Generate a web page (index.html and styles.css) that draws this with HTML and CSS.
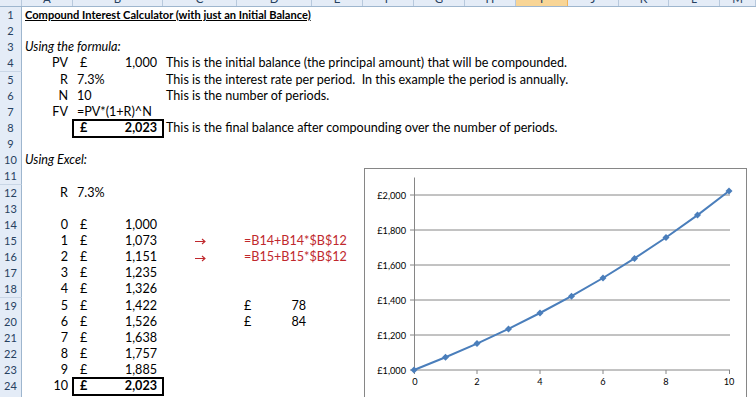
FILE: index.html
```html
<!DOCTYPE html>
<html lang="en">
<head>
    <meta charset="UTF-8">
    <title>Compound Interest Calculator</title>
    <link rel="stylesheet" href="styles.css">
</head>
<body>
    <div class="colhead">
        <div class="ch"></div>
        <div class="ch"><span>A</span></div>
        <div class="ch"><span>B</span></div>
        <div class="ch"><span>C</span></div>
        <div class="ch"><span>D</span></div>
        <div class="ch"><span>E</span></div>
        <div class="ch"><span>F</span></div>
        <div class="ch"><span>G</span></div>
        <div class="ch"><span>H</span></div>
        <div class="ch sel"><span>I</span></div>
        <div class="ch"><span>J</span></div>
        <div class="ch"><span>K</span></div>
        <div class="ch"><span>L</span></div>
        <div class="ch"><span>M</span></div>
    </div>

    <div class="row"><div class="rh">1</div><div class="c title">Compound Interest Calculator (with just an Initial Balance)</div></div>
    <div class="row"><div class="rh">2</div></div>
    <div class="row"><div class="rh">3</div><div class="c it">Using the formula:</div></div>
    <div class="row"><div class="rh">4</div><div class="c r">PV</div><div class="c acct"><span>£</span><span>1,000</span></div><div class="c">This is the initial balance (the principal amount) that will be compounded.</div></div>
    <div class="row"><div class="rh">5</div><div class="c r">R</div><div class="c txt">7.3%</div><div class="c">This is the interest rate per period.  In this example the period is annually.</div></div>
    <div class="row"><div class="rh">6</div><div class="c r">N</div><div class="c txt">10</div><div class="c">This is the number of periods.</div></div>
    <div class="row"><div class="rh">7</div><div class="c r">FV</div><div class="c txt">=PV*(1+R)^N</div></div>
    <div class="row"><div class="rh">8</div><div class="c"></div><div class="c acct box"><span>£</span><span>2,023</span></div><div class="c">This is the final balance after compounding over the number of periods.</div></div>
    <div class="row"><div class="rh">9</div></div>
    <div class="row"><div class="rh">10</div><div class="c it">Using Excel:</div></div>
    <div class="row"><div class="rh">11</div></div>
    <div class="row"><div class="rh">12</div><div class="c r">R</div><div class="c txt">7.3%</div></div>
    <div class="row"><div class="rh">13</div></div>
    <div class="row"><div class="rh">14</div><div class="c r">0</div><div class="c acct"><span>£</span><span>1,000</span></div></div>
    <div class="row"><div class="rh">15</div><div class="c r">1</div><div class="c acct"><span>£</span><span>1,073</span></div><div class="c arrow"><svg width="11" height="7" viewBox="0 0 11 7"><path d="M0 3.5H10M7 1L10 3.5L7 6"/></svg></div><div class="c fx red">=B14+B14*$B$12</div></div>
    <div class="row"><div class="rh">16</div><div class="c r">2</div><div class="c acct"><span>£</span><span>1,151</span></div><div class="c arrow"><svg width="11" height="7" viewBox="0 0 11 7"><path d="M0 3.5H10M7 1L10 3.5L7 6"/></svg></div><div class="c fx red">=B15+B15*$B$12</div></div>
    <div class="row"><div class="rh">17</div><div class="c r">3</div><div class="c acct"><span>£</span><span>1,235</span></div></div>
    <div class="row"><div class="rh">18</div><div class="c r">4</div><div class="c acct"><span>£</span><span>1,326</span></div></div>
    <div class="row"><div class="rh">19</div><div class="c r">5</div><div class="c acct"><span>£</span><span>1,422</span></div><div class="c"></div><div class="c acct"><span>£</span><span>78</span></div></div>
    <div class="row"><div class="rh">20</div><div class="c r">6</div><div class="c acct"><span>£</span><span>1,526</span></div><div class="c"></div><div class="c acct"><span>£</span><span>84</span></div></div>
    <div class="row"><div class="rh">21</div><div class="c r">7</div><div class="c acct"><span>£</span><span>1,638</span></div></div>
    <div class="row"><div class="rh">22</div><div class="c r">8</div><div class="c acct"><span>£</span><span>1,757</span></div></div>
    <div class="row"><div class="rh">23</div><div class="c r">9</div><div class="c acct"><span>£</span><span>1,885</span></div></div>
    <div class="row"><div class="rh">24</div><div class="c r">10</div><div class="c acct box"><span>£</span><span>2,023</span></div></div>
    <div class="row"><div class="rh">25</div></div>

    <!-- chart floats over the sheet, like an Excel chart object -->
    <div class="chart">
        <svg width="381" height="240">
            <g transform="translate(-1 -1)" class="axes">
                <line x1="50" y1="27" x2="366" y2="27"/>
                <line x1="50" y1="62" x2="366" y2="62"/>
                <line x1="50" y1="97" x2="366" y2="97"/>
                <line x1="50" y1="132" x2="366" y2="132"/>
                <line x1="50" y1="167" x2="366" y2="167"/>
                <line x1="50.5" y1="9.5" x2="50.5" y2="206"/>
                <line x1="46" y1="202" x2="366" y2="202"/>
                <line x1="46" y1="27" x2="50" y2="27"/>
                <line x1="46" y1="62" x2="50" y2="62"/>
                <line x1="46" y1="97" x2="50" y2="97"/>
                <line x1="46" y1="132" x2="50" y2="132"/>
                <line x1="46" y1="167" x2="50" y2="167"/>
                <line x1="113" y1="202" x2="113" y2="206"/>
                <line x1="176" y1="202" x2="176" y2="206"/>
                <line x1="239" y1="202" x2="239" y2="206"/>
                <line x1="302" y1="202" x2="302" y2="206"/>
                <line x1="365.5" y1="202" x2="365.5" y2="206"/>
            </g>
            <g transform="translate(-1 -1)" class="labels">
                <text x="42" y="30.5">£2,000</text>
                <text x="42" y="65.5">£1,800</text>
                <text x="42" y="100.5">£1,600</text>
                <text x="42" y="135.5">£1,400</text>
                <text x="42" y="170.5">£1,200</text>
                <text x="42" y="205.5">£1,000</text>
            </g>
            <g transform="translate(-1 -1)" class="xlabels">
                <text x="51" y="217">0</text>
                <text x="113" y="217">2</text>
                <text x="176" y="217">4</text>
                <text x="239" y="217">6</text>
                <text x="302" y="217">8</text>
                <text x="365" y="217">10</text>
            </g>
            <g transform="translate(-1 -1)">
                <polyline class="series" points="50,202 81.5,189.2 113,175.6 144.5,160.9 176,145 207.5,128.2 239,110 270.5,90.4 302,69.5 333.5,47.1 365,23"/>
                <g class="marks">
                    <path d="M50 198.5L53.5 202L50 205.5L46.5 202Z"/>
                    <path d="M81.5 185.7L85 189.2L81.5 192.7L78 189.2Z"/>
                    <path d="M113 172.1L116.5 175.6L113 179.1L109.5 175.6Z"/>
                    <path d="M144.5 157.4L148 160.9L144.5 164.4L141 160.9Z"/>
                    <path d="M176 141.5L179.5 145L176 148.5L172.5 145Z"/>
                    <path d="M207.5 124.7L211 128.2L207.5 131.7L204 128.2Z"/>
                    <path d="M239 106.5L242.5 110L239 113.5L235.5 110Z"/>
                    <path d="M270.5 86.9L274 90.4L270.5 93.9L267 90.4Z"/>
                    <path d="M302 66L305.5 69.5L302 73L298.5 69.5Z"/>
                    <path d="M333.5 43.6L337 47.1L333.5 50.6L330 47.1Z"/>
                    <path d="M365 19.5L368.5 23L365 26.5L361.5 23Z"/>
                </g>
            </g>
        </svg>
    </div>
</body>
</html>
```

FILE: styles.css
```css
* {
    margin: 0;
    padding: 0;
    box-sizing: border-box;
}
body {
    width: 756px;
    height: 397px;
    overflow: hidden;
    position: relative;
    background: #fff;
    color: #000;
    font-family: Lato, "Liberation Sans", sans-serif;
    font-size: 12.6px;
}
.colhead {
    display: grid;
    grid-template-columns: 22px 51px 90px 74px 75px 51px 51px 51px 51px 52px 51px 50px 51px 1fr;
    height: 7px;
    overflow: hidden;
    background: #e4ecf7;
    border-bottom: 1px solid #9eb6ce;
    font-size: 11.5px;
}
.ch {
    overflow: hidden;
    border-right: 1px solid #b8c9dd;
    text-align: center;
    color: #27415f;
}
.ch span {
    display: block;
    line-height: 16px;
    margin-top: -9px;
}
.ch.sel {
    background: #f8d596;
    border-right-color: #f2b357;
}
.row {
    display: grid;
    grid-template-columns: 22px 51px 90px 74px 75px 1fr;
    height: 16.15px;
}
.rh {
    background: #e4ecf7;
    border-right: 1px solid #9eb6ce;
    border-bottom: 1px solid #c9d6e6;
    text-align: center;
    line-height: 16px;
    font-size: 11px;
    color: #27415f;
}
.c {
    line-height: 16px;
    white-space: pre;
    padding-left: 3px;
}
.r {
    text-align: right;
    padding: 0 5px 0 0;
}
.txt {
    padding-left: 4px;
}
.acct {
    display: flex;
    justify-content: space-between;
    padding: 0 6px 0 7px;
}
.fx {
    padding-left: 7px;
}
.arrow {
    display: flex;
    align-items: center;
    justify-content: center;
    padding: 1px 0 0;
}
.arrow svg path {
    fill: none;
    stroke: #c0282d;
    stroke-width: 1.1;
}
.red {
    color: #c0282d;
}
.title {
    font-weight: bold;
    text-decoration: underline;
    font-size: 11.1px;
}
.it {
    font-style: italic;
}
.box {
    outline: 2px solid #000;
    outline-offset: -1px;
    font-weight: bold;
}
.chart {
    position: absolute;
    left: 364px;
    top: 168px;
    width: 383px;
    height: 242px;
    border: 1px solid #868686;
    background: #fff;
}
.chart svg {
    display: block;
}
.axes line {
    stroke: #868686;
    stroke-width: 1;
}
.labels text,
.xlabels text {
    font-family: Lato, "Liberation Sans", sans-serif;
    font-size: 9.2px;
    fill: #000;
}
.labels text {
    text-anchor: end;
}
.xlabels text {
    text-anchor: middle;
}
.series {
    fill: none;
    stroke: #4a7ebb;
    stroke-width: 2;
}
.marks path {
    fill: #4a7ebb;
}
```
